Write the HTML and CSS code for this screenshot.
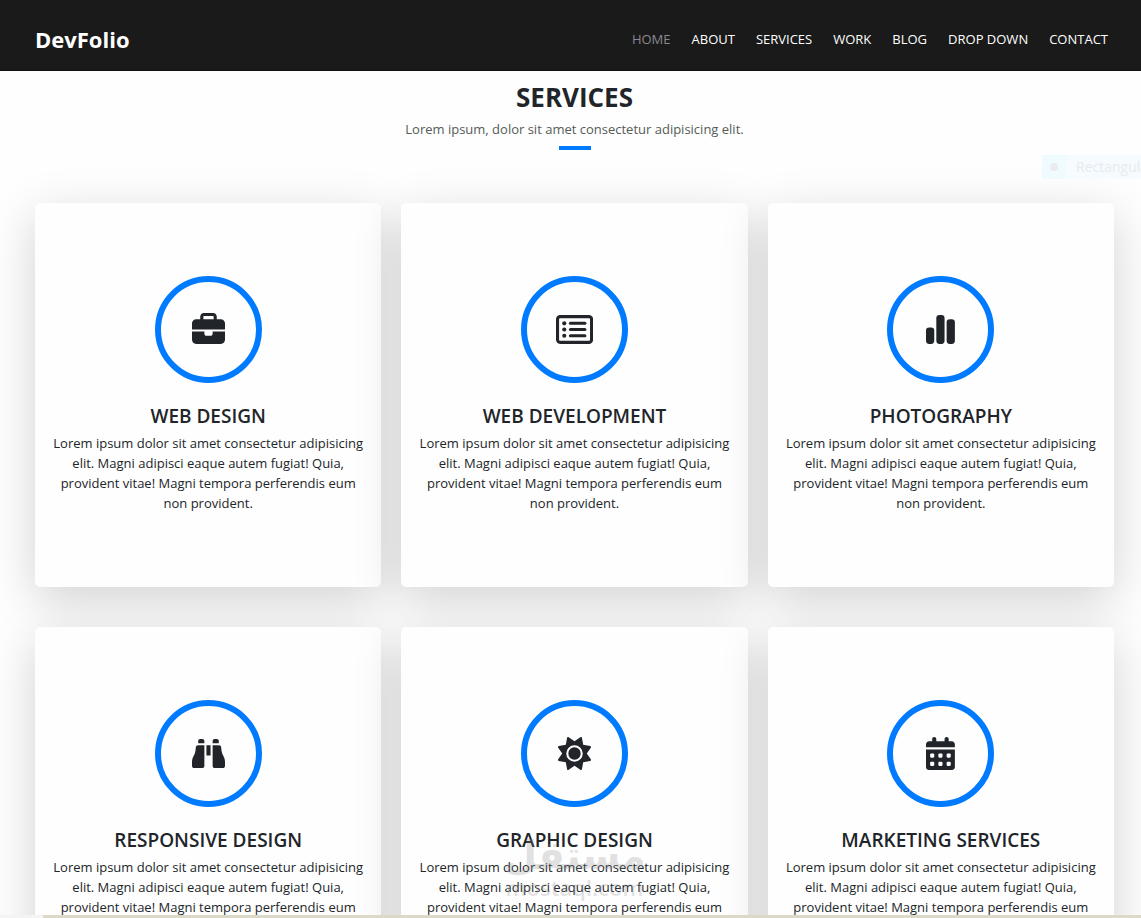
FILE: index.html
```
<!DOCTYPE html>
<html lang="en">
<head>
    <meta charset="UTF-8">
    <meta name="viewport" content="width=device-width, initial-scale=1.0">
    <title>DevFolio</title>
    <link rel="stylesheet" href="styles.css">
</head>
<body>
    <header class="navbar">
        <a class="brand" href="#">DevFolio</a>
        <nav class="menu">
            <a class="active" href="#home">HOME</a>
            <a href="#about">ABOUT</a>
            <a href="#services">SERVICES</a>
            <a href="#work">WORK</a>
            <a href="#blog">BLOG</a>
            <a href="#dropdown">DROP DOWN</a>
            <a href="#contact">CONTACT</a>
        </nav>
    </header>

    <main class="services" id="services">
        <div class="section-title">
            <h1>SERVICES</h1>
            <p>Lorem ipsum, dolor sit amet consectetur adipisicing elit.</p>
            <div class="line"></div>
        </div>

        <div class="cards">
            <article class="card">
                <div class="circle">
                    <svg class="icon" viewBox="0 0 512 512"><path d="M184 48H328c4.400 0 8 3.600 8 8V96H176V56c0-4.400 3.600-8 8-8zm-56 8V96H64C28.700 96 0 124.700 0 160v96H192 320 512V160c0-35.300-28.700-64-64-64H384V56c0-30.900-25.100-56-56-56H184c-30.900 0-56 25.100-56 56zM512 288H320v32c0 17.700-14.300 32-32 32H224c-17.700 0-32-14.300-32-32V288H0V416c0 35.300 28.700 64 64 64H448c35.300 0 64-28.700 64-64V288z"/></svg>
                </div>
                <h2>WEB DESIGN</h2>
                <p>Lorem ipsum dolor sit amet consectetur adipisicing elit. Magni adipisci eaque autem fugiat! Quia, provident vitae! Magni tempora perferendis eum non provident.</p>
            </article>
            <article class="card">
                <div class="circle">
                    <svg class="icon" viewBox="0 0 576 512"><path d="M64 80c-8.800 0-16 7.200-16 16V416c0 8.800 7.200 16 16 16H512c8.800 0 16-7.200 16-16V96c0-8.800-7.200-16-16-16H64zM0 96C0 60.700 28.700 32 64 32H512c35.300 0 64 28.700 64 64V416c0 35.300-28.700 64-64 64H64c-35.300 0-64-28.700-64-64V96z"/><circle cx="128" cy="160" r="32"/><circle cx="128" cy="256" r="32"/><circle cx="128" cy="352" r="32"/><rect x="200" y="136" width="272" height="48" rx="24"/><rect x="200" y="232" width="272" height="48" rx="24"/><rect x="200" y="328" width="272" height="48" rx="24"/></svg>
                </div>
                <h2>WEB DEVELOPMENT</h2>
                <p>Lorem ipsum dolor sit amet consectetur adipisicing elit. Magni adipisci eaque autem fugiat! Quia, provident vitae! Magni tempora perferendis eum non provident.</p>
            </article>
            <article class="card">
                <div class="circle">
                    <svg class="icon" viewBox="0 0 448 512"><rect x="0" y="224" width="128" height="256" rx="48"/><rect x="160" y="32" width="128" height="448" rx="48"/><rect x="320" y="96" width="128" height="384" rx="48"/></svg>
                </div>
                <h2>PHOTOGRAPHY</h2>
                <p>Lorem ipsum dolor sit amet consectetur adipisicing elit. Magni adipisci eaque autem fugiat! Quia, provident vitae! Magni tempora perferendis eum non provident.</p>
            </article>
            <article class="card">
                <div class="circle">
                    <svg class="icon" viewBox="0 0 512 512"><path d="M128 32h32c17.700 0 32 14.300 32 32V96H96V64c0-17.700 14.300-32 32-32zm64 96V448c0 17.700-14.300 32-32 32H32c-17.700 0-32-14.300-32-32V388.900c0-34.600 9.400-68.600 27.200-98.300C40.900 267.800 49.700 242.400 53 216L60.500 156c2-16 15.600-28 31.800-28H192zm227.800 0c16.100 0 29.800 12 31.800 28L459 216c3.300 26.400 12.100 51.800 25.800 74.600c17.800 29.700 27.200 63.700 27.200 98.300V448c0 17.700-14.300 32-32 32H352c-17.700 0-32-14.300-32-32V128h99.800zM320 64c0-17.700 14.300-32 32-32h32c17.700 0 32 14.300 32 32V96H320V64zm-32 64V288H224V128h64z"/></svg>
                </div>
                <h2>RESPONSIVE DESIGN</h2>
                <p>Lorem ipsum dolor sit amet consectetur adipisicing elit. Magni adipisci eaque autem fugiat! Quia, provident vitae! Magni tempora perferendis eum non provident.</p>
            </article>
            <article class="card">
                <div class="circle">
                    <svg class="icon" viewBox="0 0 512 512"><path d="M361.500 1.200c5 2.100 8.600 6.600 9.600 11.900L391 121l107.900 19.800c5.300 1 9.800 4.600 11.900 9.600s1.500 10.700-1.600 15.200L446.900 256l62.300 90.300c3.100 4.500 3.700 10.200 1.600 15.200s-6.600 8.600-11.900 9.600L391 391 371.100 498.900c-1 5.300-4.600 9.800-9.600 11.900s-10.700 1.500-15.200-1.600L256 446.900l-90.300 62.300c-4.500 3.100-10.200 3.700-15.200 1.600s-8.600-6.600-9.600-11.900L121 391 13.100 371.100c-5.300-1-9.800-4.600-11.900-9.600s-1.500-10.700 1.600-15.200L65.100 256 2.800 165.700c-3.100-4.500-3.700-10.200-1.600-15.200s6.600-8.600 11.900-9.600L121 121 140.900 13.100c1-5.300 4.600-9.800 9.600-11.900s10.700-1.500 15.200 1.600L256 65.100 346.300 2.800c4.500-3.100 10.200-3.700 15.200-1.600zM160 256a96 96 0 1 1 192 0 96 96 0 1 1 -192 0zm224 0a128 128 0 1 0 -256 0 128 128 0 1 0 256 0z"/></svg>
                </div>
                <h2>GRAPHIC DESIGN</h2>
                <p>Lorem ipsum dolor sit amet consectetur adipisicing elit. Magni adipisci eaque autem fugiat! Quia, provident vitae! Magni tempora perferendis eum non provident.</p>
                <div class="watermark">
                    <span class="watermark-ar" lang="ar">مستقل</span>
                    <span class="watermark-en">mostaql.com</span>
                </div>
            </article>
            <article class="card">
                <div class="circle">
                    <svg class="icon" viewBox="0 0 448 512"><path d="M128 0c17.700 0 32 14.300 32 32V64H288V32c0-17.700 14.300-32 32-32s32 14.300 32 32V64h48c26.500 0 48 21.500 48 48v48H0V112C0 85.500 21.500 64 48 64H96V32c0-17.700 14.300-32 32-32zM0 192H448V464c0 26.500-21.500 48-48 48H48c-26.500 0-48-21.500-48-48V192z"/><g fill="#fff"><rect x="64" y="256" width="64" height="64" rx="16"/><rect x="192" y="256" width="64" height="64" rx="16"/><rect x="320" y="256" width="64" height="64" rx="16"/><rect x="64" y="384" width="64" height="64" rx="16"/><rect x="192" y="384" width="64" height="64" rx="16"/><rect x="320" y="384" width="64" height="64" rx="16"/></g></svg>
                </div>
                <h2>MARKETING SERVICES</h2>
                <p>Lorem ipsum dolor sit amet consectetur adipisicing elit. Magni adipisci eaque autem fugiat! Quia, provident vitae! Magni tempora perferendis eum non provident.</p>
            </article>
        </div>
    </main>

    <div class="snip-hint"><span class="dot"></span><span class="snip-label">Rectangular</span></div>
    <div class="bottom-bar"></div>
</body>
</html>
```
FILE: styles.css
```
* {
    box-sizing: border-box;
}

body {
    margin: 0;
    font-family: "Segoe UI", "Open Sans", "Noto Sans", sans-serif;
    font-size: 13px;
    line-height: 20px;
    color: #212529;
    background-color: #fefefe;
}

h1,
h2,
p {
    margin: 0;
}

.navbar {
    display: flex;
    justify-content: space-between;
    align-items: center;
    padding: 24px 33px 16px 35px;
    background-color: #1a1a1a;
    border-bottom: 1px solid #111;
}

.brand {
    font-size: 22px;
    font-weight: 700;
    line-height: 30px;
    color: #fff;
    text-decoration: none;
}

.menu {
    display: flex;
    gap: 21px;
}

.menu a {
    font-size: 13px;
    font-weight: 500;
    color: #fff;
    text-decoration: none;
}

.menu .active {
    color: #8b8792;
}

.services {
    padding: 10px 27px 40px 35px;
}

.section-title {
    display: flex;
    flex-direction: column;
    align-items: center;
    margin-bottom: 53px;
    text-align: center;
}

.section-title h1 {
    font-size: 26px;
    font-weight: 700;
    line-height: 32px;
}

.section-title p {
    margin: 6px 0 7px;
    color: #555b56;
}

.line {
    width: 32px;
    height: 4px;
    background-color: #007bff;
}

.cards {
    display: grid;
    grid-template-columns: repeat(3, 1fr);
    gap: 40px 20px;
}

.card {
    position: relative;
    display: flex;
    flex-direction: column;
    align-items: center;
    padding: 73px 16px 74px;
    text-align: center;
    background-color: #fefefe;
    border-radius: 5px;
    box-shadow: 0 13px 48px rgba(0, 0, 0, 0.175);
}

.circle {
    display: flex;
    justify-content: center;
    align-items: center;
    width: 107px;
    height: 107px;
    margin-bottom: 20px;
    border: 6px solid #007bff;
    border-radius: 50%;
}

.icon {
    height: 33px;
    fill: #212529;
}

.card h2 {
    margin-bottom: 4px;
    font-size: 19px;
    font-weight: 600;
    line-height: 26px;
}

.snip-hint {
    position: absolute;
    top: 155px;
    right: 0;
    display: flex;
    align-items: center;
    width: 99px;
    height: 24px;
    overflow: hidden;
    background: linear-gradient(to right, #effbff 24px, #f6fbff 24px);
}

.dot {
    flex: none;
    width: 8px;
    height: 8px;
    margin: 0 18px 0 8px;
    border-radius: 50%;
    background-color: #ebebed;
}

.snip-label {
    font-size: 14px;
    color: #e8ebee;
}

.watermark {
    position: absolute;
    top: 208px;
    left: 0;
    right: 0;
    display: flex;
    flex-direction: column;
    align-items: center;
    color: rgba(140, 140, 140, 0.25);
    pointer-events: none;
}

.watermark-ar {
    font-family: "DejaVu Sans", sans-serif;
    font-size: 39px;
    font-weight: 700;
    line-height: 42px;
}

.watermark-en {
    font-size: 22px;
    font-weight: 600;
}

.bottom-bar {
    position: fixed;
    left: 0;
    right: 0;
    bottom: 0;
    height: 3px;
    background: linear-gradient(to right, #f4f4f4 43px, #dcd9c9 43px);
}
```
